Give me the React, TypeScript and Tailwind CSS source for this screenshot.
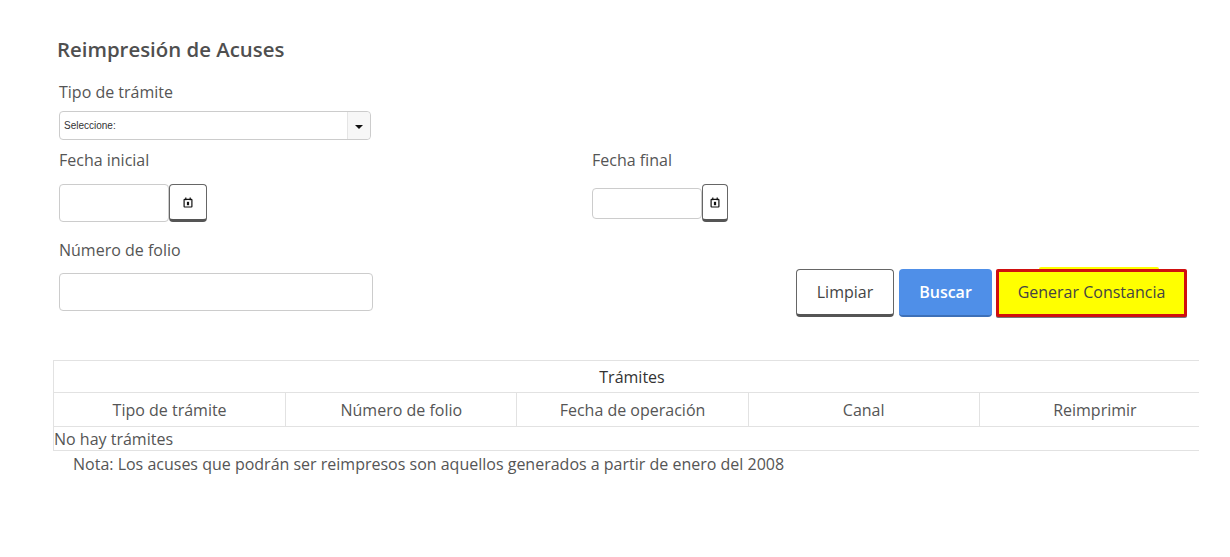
function CalendarIcon() {
  return (
    <svg width="10" height="11" viewBox="0 0 10 11" fill="none" stroke="#111" strokeWidth="1.2">
      <rect x="1.1" y="2.4" width="7.8" height="7.6" rx="0.5" />
      <path d="M2.8 0.6v2.6M7.2 0.6v2.6" />
      <rect x="3.9" y="4.8" width="2.2" height="3.4" fill="#111" stroke="none" />
    </svg>
  );
}

function CalButton({ className }: { className: string }) {
  return (
    <button className={`flex h-[38px] items-center justify-center rounded-[4px] border border-[#666] border-b-[3px] border-b-[#555] bg-white ${className}`}>
      <CalendarIcon />
    </button>
  );
}

const headers = ["Tipo de trámite", "Número de folio", "Fecha de operación", "Canal", "Reimprimir"];

export default function App() {
  return (
    <div className="min-h-[557px] bg-white pl-[53px] pr-[31px] pt-[36px] text-[16px] text-[#555] [font-family:'Open_Sans',sans-serif]">
      <h1 className="ml-[4px] text-[20.4px] font-semibold leading-[26px] text-[#4f4f4f]">Reimpresión de Acuses</h1>

      <div className="ml-[6px]">
        <div className="mt-[17px] leading-[26px]">Tipo de trámite</div>
        <div className="mt-[6px] flex h-[29px] w-[312px] items-center rounded-[4px] border border-[#ccc] bg-white">
          <span className="flex-1 pl-[4px] text-[10px] text-[#333] [font-family:'Liberation_Sans',sans-serif]">Seleccione:</span>
          <span className="flex h-full w-[23px] items-center justify-center rounded-r-[4px] border-l border-[#e5e5e5] bg-[#f7f7f7]">
            <span className="mt-[2px] h-0 w-0 border-x-[4px] border-t-[4px] border-x-transparent border-t-[#111]" />
          </span>
        </div>

        <div className="mt-[7px] grid grid-cols-[533px_1fr]">
          <div>
            <div className="leading-[26px]">Fecha inicial</div>
            <div className="mt-[11px] flex">
              <input className="h-[38px] w-[110px] rounded-[4px] border border-[#ccc] bg-white" />
              <CalButton className="w-[38px]" />
            </div>
          </div>
          <div>
            <div className="leading-[26px]">Fecha final</div>
            <div className="mt-[11px] flex items-center">
              <input className="h-[31px] w-[110px] rounded-[4px] border border-[#ccc] bg-white" />
              <CalButton className="w-[26px]" />
            </div>
          </div>
        </div>

        <div className="mt-[15px] flex items-start justify-between pr-[12px]">
          <div>
            <div className="leading-[26px]">Número de folio</div>
            <input className="mt-[10px] h-[38px] w-[314px] rounded-[4px] border border-[#ccc] bg-white" />
          </div>
          <div className="mt-[32px] flex">
            <button className="h-[48px] w-[98px] rounded-[4px] border border-[#666] border-b-[3px] border-b-[#555] bg-white text-[#444]">Limpiar</button>
            <button className="ml-[5px] h-[48px] w-[93px] rounded-[4px] border-b-[2px] border-b-[#3d70b8] bg-[#4f8fe8] font-semibold text-white">Buscar</button>
            <button className="relative ml-[4px] h-[48px] w-[191px] rounded-[2px] border-[3px] border-[#d00f0f] bg-[#ffff00] pb-[2px] text-[#444] shadow-[0_1px_0_#777]">
              Generar Constancia
              <span className="absolute left-[40px] top-[-5px] h-[2px] w-[120px] rounded-t-full bg-[#ffff00]" />
            </button>
          </div>
        </div>
      </div>

      <div className="mt-[43px] overflow-hidden">
        <div className="w-[1157px] border-b border-l border-t border-[#e2e2e2]">
          <div className="flex h-[32px] items-center justify-center border-b border-[#e2e2e2] text-[#333]">Trámites</div>
          <div className="grid h-[34px] grid-cols-5 border-b border-[#e2e2e2]">
            {headers.map((h, i) => (
              <div key={h} className={`flex items-center justify-center ${i > 0 ? "border-l border-[#e2e2e2]" : ""}`}>
                {h}
              </div>
            ))}
          </div>
          <div className="h-[23px] leading-[24px]">No hay trámites</div>
        </div>
      </div>
      <p className="ml-[20px] leading-[26px]">Nota: Los acuses que podrán ser reimpresos son aquellos generados a partir de enero del 2008</p>
    </div>
  );
}
